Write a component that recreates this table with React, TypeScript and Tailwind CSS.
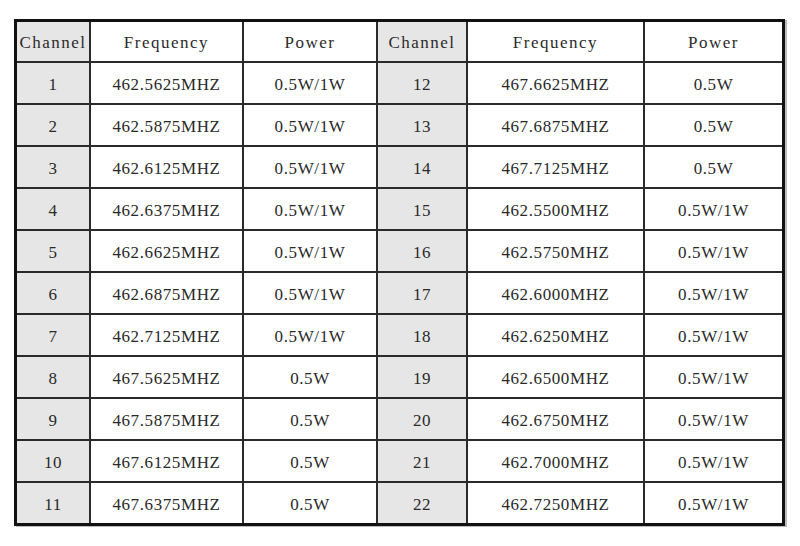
import React from "react";

const left: [string, string, string][] = [
  ["1", "462.5625MHZ", "0.5W/1W"],
  ["2", "462.5875MHZ", "0.5W/1W"],
  ["3", "462.6125MHZ", "0.5W/1W"],
  ["4", "462.6375MHZ", "0.5W/1W"],
  ["5", "462.6625MHZ", "0.5W/1W"],
  ["6", "462.6875MHZ", "0.5W/1W"],
  ["7", "462.7125MHZ", "0.5W/1W"],
  ["8", "467.5625MHZ", "0.5W"],
  ["9", "467.5875MHZ", "0.5W"],
  ["10", "467.6125MHZ", "0.5W"],
  ["11", "467.6375MHZ", "0.5W"],
];
const right: [string, string, string][] = [
  ["12", "467.6625MHZ", "0.5W"],
  ["13", "467.6875MHZ", "0.5W"],
  ["14", "467.7125MHZ", "0.5W"],
  ["15", "462.5500MHZ", "0.5W/1W"],
  ["16", "462.5750MHZ", "0.5W/1W"],
  ["17", "462.6000MHZ", "0.5W/1W"],
  ["18", "462.6250MHZ", "0.5W/1W"],
  ["19", "462.6500MHZ", "0.5W/1W"],
  ["20", "462.6750MHZ", "0.5W/1W"],
  ["21", "462.7000MHZ", "0.5W/1W"],
  ["22", "462.7250MHZ", "0.5W/1W"],
];

function Cell({
  children,
  grey,
  head,
}: {
  children: React.ReactNode;
  grey?: boolean;
  head?: boolean;
}) {
  return (
    <div
      className={
        "flex items-center justify-center pt-[3px] text-[17px] text-[#2a2a2a] " +
        (head ? "tracking-[1.5px] " : "tracking-[0.6px] ") +
        (grey ? "bg-[#e6e6e6]" : "bg-white")
      }
    >
      {children}
    </div>
  );
}

export default function App() {
  const rows = left.map((l, i) => [...l, ...right[i]]);
  return (
    <div
      className="w-[800px] h-[546px] bg-white pl-[14px] pt-[19px]"
      style={{ fontFamily: '"Liberation Serif", "DejaVu Serif", serif' }}
    >
      <div className="w-[771px] border-[3px] border-[#111] bg-[#2a2a2a] grid grid-cols-[72px_151px_132px_88px_175px_137px] grid-rows-[39px_repeat(11,40px)] gap-[2px] shadow-[2px_1px_0_#bbb]">
        <Cell grey head>Channel</Cell>
        <Cell head>Frequency</Cell>
        <Cell head>Power</Cell>
        <Cell grey head>Channel</Cell>
        <Cell head>Frequency</Cell>
        <Cell head>Power</Cell>
        {rows.map((r, i) => (
          <React.Fragment key={i}>
            <Cell grey>{r[0]}</Cell>
            <Cell>{r[1]}</Cell>
            <Cell>{r[2]}</Cell>
            <Cell grey>{r[3]}</Cell>
            <Cell>{r[4]}</Cell>
            <Cell>{r[5]}</Cell>
          </React.Fragment>
        ))}
      </div>
    </div>
  );
}
